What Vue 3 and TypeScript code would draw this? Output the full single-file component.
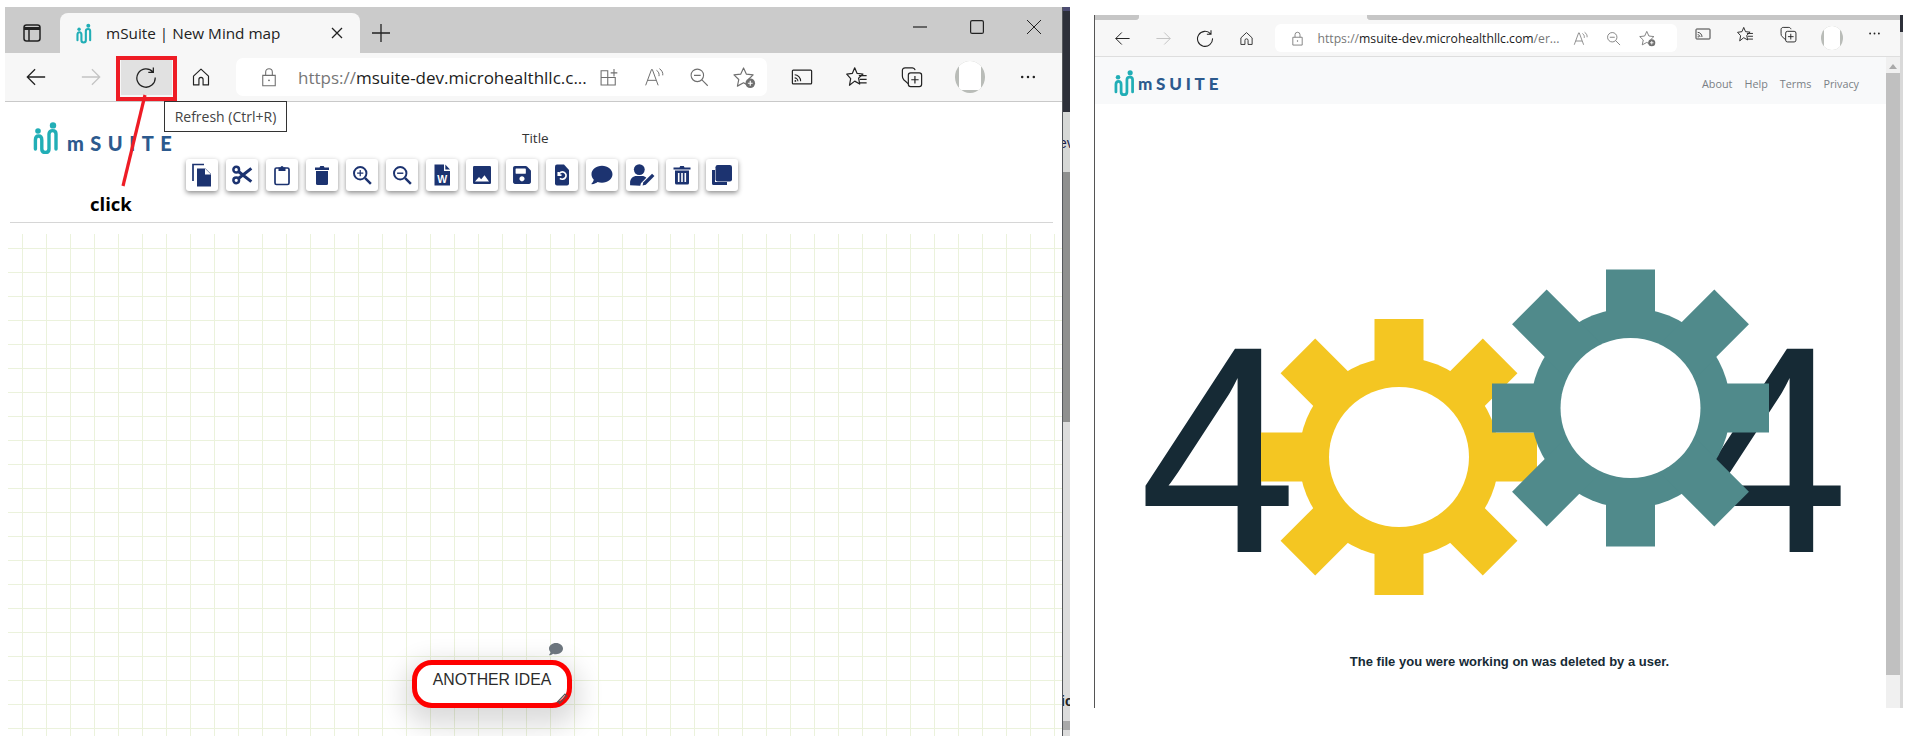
<script setup lang="ts">
const buttons: string[] = ['copy','cut','clip','trash','zin','zout','word','image','save','undo','comment','user','trasha','clone']
</script>

<template>
  <div class="shot">
    <svg class="defs" width="0" height="0">
      <symbol id="logo" viewBox="0 0 26 32">
        <circle cx="5" cy="9" r="2.8" fill="#21aeb6"/>
        <circle cx="20" cy="3.4" r="3.2" fill="#21aeb6"/>
        <path d="M2.4 27V18c0-2.6 1.4-4 3.2-4s3.2 1.4 3.200 4v9c0 2.600 1.600 3.500 3.600 3.500s3.600-.9 3.600-3.500V12c0-2 1.600-3.400 3.600-3.400s3.400 1.400 3.400 3.400v15" fill="none" stroke="#21aeb6" stroke-width="3.400" stroke-linecap="round"/>
      </symbol>
      <symbol id="i-back" viewBox="0 0 24 24"><path d="M22 12H2.5M11 3.5 2.5 12l8.500 8.500" fill="none" stroke="currentColor" stroke-width="1.400"/></symbol>
      <symbol id="i-refresh" viewBox="0 0 24 24"><path d="M19.500 6.500A10 10 0 1 0 22 12.500M20 1.500v5.500h-5.500" fill="none" stroke="currentColor" stroke-width="1.400"/></symbol>
      <symbol id="i-home" viewBox="0 0 24 24"><path d="M3 11 12 2.500 21 11v10.500h-6.500V15a2.500 2.500 0 0 0-5 0v6.500H3z" fill="none" stroke="currentColor" stroke-width="1.400" stroke-linejoin="round"/></symbol>
      <symbol id="i-lock" viewBox="0 0 24 24"><path d="M4.500 10h15v12.500h-15zM8 10V6a4 4 0 0 1 8 0v4" fill="none" stroke="currentColor" stroke-width="1.300"/><circle cx="12" cy="16" r="1.100" fill="currentColor"/></symbol>
      <symbol id="i-apps" viewBox="0 0 24 24"><path d="M2.500 4.500h8v8h-8zM2.500 12.500v9h8v-9zM10.500 12.500h9v9h-9zM14 7h8M18 2.500v9" fill="none" stroke="currentColor" stroke-width="1.300"/></symbol>
      <symbol id="i-read" viewBox="0 0 24 24"><path d="M2 22 9 3h1l7 19M4.500 16h10M15 4c2.500 1.500 3.500 4 3 7M18.500 2c3 2 4.500 5 4 8" fill="none" stroke="currentColor" stroke-width="1.200"/></symbol>
      <symbol id="i-zoom" viewBox="0 0 24 24"><circle cx="10" cy="10" r="7.500" fill="none" stroke="currentColor" stroke-width="1.300"/><path d="M15.500 15.500 22.500 22.500M6 10h8" fill="none" stroke="currentColor" stroke-width="1.300"/></symbol>
      <symbol id="i-fav" viewBox="0 0 24 24"><path d="M11 2l3 6.500 7 .8-5 4.800 1.400 6.900L11 17.500l-6.400 3.500L6 14.100 1 9.300l7-.8z" fill="none" stroke="currentColor" stroke-width="1.200" stroke-linejoin="round"/><circle cx="18" cy="18" r="5" fill="currentColor"/><path d="M18 15.500v5M15.500 18h5" stroke="#fff" stroke-width="1.200"/></symbol>
      <symbol id="i-cast" viewBox="0 0 24 24"><rect x="1.500" y="4.500" width="21" height="15" rx="1" fill="none" stroke="currentColor" stroke-width="1.300"/><path d="M4 9.500c3.500 0 6.500 3 6.500 7M4 13c1.700 0 3.500 1.500 3.500 3.500" fill="none" stroke="currentColor" stroke-width="1.200"/><circle cx="4.800" cy="16.300" r="1" fill="currentColor"/></symbol>
      <symbol id="i-favs" viewBox="0 0 24 24"><path d="M9.500 2l2.500 6 6.500.7-4.800 4.500 1.300 6.500L9.500 16.500 3.800 21l1.300-7.300L.8 8.900 7 8z" fill="none" stroke="currentColor" stroke-width="1.300" stroke-linejoin="round"/><path d="M14 10.500h8.500M15 14.500h7.500M15 18.500h7.500" stroke="currentColor" stroke-width="1.300"/></symbol>
      <symbol id="i-coll" viewBox="0 0 24 24"><rect x="8" y="7.500" width="14.500" height="15" rx="2.500" fill="none" stroke="currentColor" stroke-width="1.300"/><path d="M15.200 11v8M11.200 15h8M8 19.500 3 15c-1-1-1.500-2-1.500-4V5c0-1.500 1-3 3-3h8c1.500 0 2.500 1 3 2.500" fill="none" stroke="currentColor" stroke-width="1.300"/></symbol>
      <symbol id="i-more" viewBox="0 0 24 24"><circle cx="5" cy="12" r="1.500" fill="currentColor"/><circle cx="12" cy="12" r="1.500" fill="currentColor"/><circle cx="19" cy="12" r="1.500" fill="currentColor"/></symbol>
    </svg>

    <section class="win-left">
      <div class="tabstrip">
        <div class="sidebtn">
          <svg width="18" height="18" viewBox="0 0 18 18"><rect x="1" y="1" width="16" height="16" rx="2.500" fill="none" stroke="#222" stroke-width="1.500"/><path d="M1 4.500h16" stroke="#222" stroke-width="3"/><path d="M6 5v12" stroke="#222" stroke-width="1.500"/></svg>
        </div>
        <div class="tab">
          <svg class="tab-ico" width="16" height="21"><use href="#logo"/></svg>
          <span class="tab-title">mSuite | New Mind map</span>
          <svg width="12" height="12" viewBox="0 0 12 12"><path d="M1 1l10 10M11 1 1 11" stroke="#222" stroke-width="1.300"/></svg>
        </div>
        <div class="plus">
          <svg width="18" height="18" viewBox="0 0 18 18"><path d="M9 0v18M0 9h18" stroke="#222" stroke-width="1.300"/></svg>
        </div>
        <div class="spacer"></div>
        <div class="winbtns">
          <div class="winbtn"><svg width="14" height="14" viewBox="0 0 14 14"><path d="M0 7h14" stroke="#222" stroke-width="1.200"/></svg></div>
          <div class="winbtn"><svg width="14" height="14" viewBox="0 0 14 14"><rect x=".6" y=".6" width="12.800" height="12.800" rx="1.500" fill="none" stroke="#222" stroke-width="1.200"/></svg></div>
          <div class="winbtn"><svg width="14" height="14" viewBox="0 0 14 14"><path d="M0 0l14 14M14 0 0 14" stroke="#222" stroke-width="1"/></svg></div>
        </div>
      </div>
      <div class="bar">
        <div class="navbtn dark"><svg width="22" height="22"><use href="#i-back"/></svg></div>
        <div class="navbtn faint flip"><svg width="22" height="22"><use href="#i-back"/></svg></div>
        <div class="navbtn dark hot"><svg width="22" height="22"><use href="#i-refresh"/></svg></div>
        <div class="navbtn dark"><svg width="20" height="22"><use href="#i-home"/></svg></div>
        <div class="addr">
          <svg class="lock" width="20" height="22"><use href="#i-lock"/></svg>
          <span class="url"><span class="g">https://</span>msuite-dev.microhealthllc.c...</span>
          <div class="addr-ico"><svg width="20" height="20"><use href="#i-apps"/></svg></div>
          <div class="addr-ico"><svg width="20" height="20"><use href="#i-read"/></svg></div>
          <div class="addr-ico"><svg width="20" height="20"><use href="#i-zoom"/></svg></div>
          <div class="addr-ico"><svg width="23" height="23"><use href="#i-fav"/></svg></div>
        </div>
        <div class="bar-right">
          <div class="navbtn dark"><svg width="22" height="22"><use href="#i-cast"/></svg></div>
          <div class="navbtn dark"><svg width="22" height="22"><use href="#i-favs"/></svg></div>
          <div class="navbtn dark"><svg width="22" height="22"><use href="#i-coll"/></svg></div>
          <div class="navbtn av"><div class="avatar"><i></i></div></div>
          <div class="navbtn dark more"><svg width="20" height="20"><use href="#i-more"/></svg></div>
        </div>
      </div>

      <div class="page">
        <header class="mm-head">
          <div class="mm-logo">
            <svg width="26" height="32"><use href="#logo"/></svg>
            <span class="wordmark big">mSUITE</span>
          </div>
          <div class="mm-main">
            <div class="mm-title">Title</div>
            <div class="tools">
              <div v-for="b in buttons" :key="b" class="tool">
                <svg v-if="b === 'copy'" viewBox="0 0 24 24"><path d="M7 5.500h8.500L21 11v12.500H7z"/><path d="M15 5.500V11.500h6" fill="#fff"/><path d="M3 18V1.500h11" fill="none" stroke="currentColor" stroke-width="1.700"/></svg>
                <svg v-else-if="b === 'cut'" viewBox="-1.500 -1.500 27 27"><g fill="none" stroke="currentColor"><circle cx="5.500" cy="6" r="3.200" stroke-width="2.800"/><circle cx="5.500" cy="18" r="3.200" stroke-width="2.800"/><path d="M8 8 22.500 19.500M8 16 22.500 4.500" stroke-width="3.400"/></g></svg>
                <svg v-else-if="b === 'clip'" viewBox="0 0 24 24"><rect x="5" y="5" width="14" height="16.500" rx="1.500" fill="none" stroke="currentColor" stroke-width="1.700"/><path d="M8.500 4.500h2a1.500 1.500 0 0 1 3 0h2v3.500h-7z"/></svg>
                <svg v-else-if="b === 'trash'" viewBox="0 0 24 24"><path d="M5 4.500h4.500l.8-1.500h3.400l.8 1.500H19V7H5z"/><path d="M6 8h12v12.500a1.500 1.500 0 0 1-1.500 1.500h-9A1.500 1.500 0 0 1 6 20.500z"/></svg>
                <svg v-else-if="b === 'zin'" viewBox="-1.500 -1.500 27 27"><circle cx="10" cy="10" r="7" fill="none" stroke="currentColor" stroke-width="2.200"/><path d="M15.500 15.500 22 22" stroke="currentColor" stroke-width="2.800"/><path d="M10 6.500v7M6.500 10h7" stroke="currentColor" stroke-width="1.400"/></svg>
                <svg v-else-if="b === 'zout'" viewBox="-1.500 -1.500 27 27"><circle cx="10" cy="10" r="7" fill="none" stroke="currentColor" stroke-width="2.200"/><path d="M15.500 15.500 22 22" stroke="currentColor" stroke-width="2.800"/><path d="M6.500 10h7" stroke="currentColor" stroke-width="1.600"/></svg>
                <svg v-else-if="b === 'word'" viewBox="0 0 24 24"><path d="M4.500 1.500h9.500v6.500h6v14.500H4.500z"/><path d="M15.300 1.500 20 6.500h-4.700z"/><text x="12.300" y="20" text-anchor="middle" class="w">W</text></svg>
                <svg v-else-if="b === 'image'" viewBox="0 0 24 24"><rect x="3" y="3" width="18" height="18" rx="1.200"/><path d="M5 18.500l4-4.500 2.200 2.200 3.300-4 4.500 6.300z" fill="#fff"/></svg>
                <svg v-else-if="b === 'save'" viewBox="-76 -44 600 600"><path d="M433.941 129.941l-83.882-83.882A48 48 0 0 0 316.118 32H48C21.490 32 0 53.490 0 80v352c0 26.510 21.490 48 48 48h352c26.510 0 48-21.490 48-48V163.882a48 48 0 0 0-14.059-33.941zM224 416c-35.346 0-64-28.654-64-64 0-35.346 28.654-64 64-64s64 28.654 64 64c0 35.346-28.654 64-64 64zm96-304.520V212c0 6.627-5.373 12-12 12H76c-6.627 0-12-5.373-12-12V108c0-6.627 5.373-12 12-12h228.520c3.183 0 6.235 1.264 8.485 3.515l3.480 3.480A11.996 11.996 0 0 1 320 111.480z"/></svg>
                <svg v-else-if="b === 'undo'" viewBox="0 0 24 24"><path d="M5 3.500a2 2 0 0 1 2-2h7l5 5.500v13.500a2 2 0 0 1-2 2H7a2 2 0 0 1-2-2z"/><path d="M8.800 11.500a3.700 3.700 0 1 1 1.100 3.800M8.300 9v3.200h3.200" fill="none" stroke="#fff" stroke-width="1.700"/></svg>
                <svg v-else-if="b === 'comment'" viewBox="-36 -36 585 585"><path d="M256 32C114.600 32 0 125.100 0 240c0 49.600 21.400 95 57 130.700C44.500 421.100 2.700 466 2.200 466.500c-2.200 2.300-2.800 5.700-1.500 8.700S4.800 480 8 480c66.300 0 116-31.800 140.600-51.400 32.700 12.300 69 19.400 107.400 19.400 141.400 0 256-93.100 256-208S397.400 32 256 32z"/></svg>
                <svg v-else-if="b === 'user'" viewBox="0 0 24 24" class="wide"><circle cx="9.500" cy="7" r="5"/><path d="M1 21.500v-2.500c0-3.500 2.800-6 6-6h5c1.500 0 3 .6 4 1.500l-5 5-.6 2.500z"/><path d="M12.500 21.800l.8-3 8-8 2.200 2.200-8 8z"/></svg>
                <svg v-else-if="b === 'trasha'" viewBox="0 0 24 24"><path d="M3.500 4.500h6l.7-1.500h3.600l.7 1.500h6v2h-17z"/><path d="M5 7.500h14V20a1.500 1.500 0 0 1-1.500 1.500h-11A1.500 1.500 0 0 1 5 20z"/><path d="M8.700 10v9M12 10v9M15.300 10v9" stroke="#fff" stroke-width="1.600"/></svg>
                <svg v-else viewBox="0 0 24 24"><rect x="5.500" y="2" width="16.500" height="16.500" rx="2.200"/><path d="M3.500 7v13.500h13.500" fill="none" stroke="currentColor" stroke-width="3" stroke-linejoin="round"/></svg>
              </div>
            </div>
          </div>
        </header>
        <div class="sep"></div>
        <div class="canvas">
          <div class="node">
            ANOTHER IDEA
            <svg class="node-note" width="14" height="14" viewBox="0 10 512 490"><path d="M256 32C114.600 32 0 125.100 0 240c0 49.600 21.400 95 57 130.700C44.500 421.100 2.700 466 2.200 466.500c-2.200 2.300-2.800 5.700-1.500 8.700S4.800 480 8 480c66.300 0 116-31.800 140.600-51.400 32.700 12.300 69 19.400 107.400 19.400 141.400 0 256-93.100 256-208S397.400 32 256 32z"/></svg>
            <svg class="node-pen" width="12" height="12" viewBox="0 0 12 12"><path d="M1 10.500 9 2l2 2-8 8M2 9l2 2" fill="none" stroke="#555" stroke-width="1.100"/></svg>
          </div>
        </div>
      </div>
    </section>

    <aside class="strip">
      <div class="s-dark"></div>
      <div class="s-light"><span>ev</span></div>
      <div class="s-grey"><span>ic</span></div>
    </aside>

    <section class="win-right">
      <div class="r-tabs"><i class="r-t1"></i><i class="r-t2"></i><i class="r-t3"></i></div>
      <div class="r-bar">
        <div class="r-nav dark"><svg width="17" height="17"><use href="#i-back"/></svg></div>
        <div class="r-nav faint flip"><svg width="17" height="17"><use href="#i-back"/></svg></div>
        <div class="r-nav dark"><svg width="18" height="18"><use href="#i-refresh"/></svg></div>
        <div class="r-nav dark"><svg width="15" height="17"><use href="#i-home"/></svg></div>
        <div class="r-addr">
          <svg class="r-lock" width="15" height="17"><use href="#i-lock"/></svg>
          <span class="r-url"><span class="g">https://</span>msuite-dev.microhealthllc.com<span class="g">/er...</span></span>
          <svg class="r-aico" width="15" height="15"><use href="#i-read"/></svg>
          <svg class="r-aico" width="15" height="15"><use href="#i-zoom"/></svg>
          <svg class="r-aico" width="17" height="17"><use href="#i-fav"/></svg>
        </div>
        <div class="r-right">
          <div class="r-nav2 dark"><svg width="16" height="16"><use href="#i-cast"/></svg></div>
          <div class="r-nav2 dark"><svg width="17" height="17"><use href="#i-favs"/></svg></div>
          <div class="r-nav2 dark"><svg width="17" height="17"><use href="#i-coll"/></svg></div>
          <div class="r-nav2"><div class="avatar small"><i></i></div></div>
          <div class="r-nav2 dark"><svg width="15" height="15"><use href="#i-more"/></svg></div>
        </div>
      </div>
      <div class="r-page">
        <div class="r-content">
          <header class="r-head">
            <div class="r-logo">
              <svg width="21" height="26"><use href="#logo"/></svg>
              <span class="wordmark small">mSUITE</span>
            </div>
            <nav class="r-links"><span>About</span><span>Help</span><span>Terms</span><span>Privacy</span></nav>
          </header>
          <svg class="art" width="791" height="540" viewBox="1095 104 791 540">
            <g class="digit">
              <text transform="translate(1139 552) scale(1 1.040)">4</text>
              <text transform="translate(1691 552) scale(1 1.040)">4</text>
            </g>
            <g fill="#f4c622" transform="translate(1399 457)">
              <circle r="100"/>
              <rect x="-24.500" y="-138" width="49" height="276"/>
              <rect x="-138" y="-24.500" width="276" height="49"/>
              <rect x="-24.500" y="-143" width="49" height="286" transform="rotate(45)"/>
              <rect x="-24.500" y="-143" width="49" height="286" transform="rotate(-45)"/>
              <circle r="70" fill="#fff"/>
            </g>
            <g fill="#508a8b" transform="translate(1630.500 408)">
              <circle r="100"/>
              <rect x="-24.500" y="-138.500" width="49" height="277"/>
              <rect x="-138.500" y="-24.500" width="277" height="49"/>
              <rect x="-24.500" y="-143" width="49" height="286" transform="rotate(45)"/>
              <rect x="-24.500" y="-143" width="49" height="286" transform="rotate(-45)"/>
              <circle r="70" fill="#fff"/>
            </g>
          </svg>
          <p class="msg">The file you were working on was deleted by a user.</p>
        </div>
        <div class="r-scroll">
          <span class="r-up"></span>
          <span class="r-thumb"></span>
        </div>
      </div>
    </section>
    <div class="r-edge"></div>

    <div class="mark-box"></div>
    <svg class="mark-arrow" width="40" height="100" viewBox="0 0 40 100"><path d="M30 1 8 92" stroke="#ee1c25" stroke-width="3.200" fill="none"/></svg>
    <div class="mark-text">click</div>
    <div class="tip">Refresh (Ctrl+R)</div>
  </div>
</template>

<style>
html, body { margin: 0; background: #fff; }
</style>

<style scoped>
.shot {
  position: relative;
  width: 1920px;
  height: 736px;
  overflow: hidden;
  background: #fff;
  display: flex;
  align-items: flex-start;
  font-family: "Open Sans", "Liberation Sans", sans-serif;
  color: #1b1b1b;
}
.defs { position: absolute; }

/* left window */
.win-left {
  margin: 7px 0 0 5px;
  width: 1057px;
  height: 729px;
  display: flex;
  flex-direction: column;
  flex: none;
  background: #fff;
}
.tabstrip {
  height: 46px;
  background: #cbcbcb;
  display: flex;
  align-items: flex-end;
  flex: none;
}
.sidebtn {
  width: 55px; height: 40px;
  display: flex; align-items: center; justify-content: center;
  padding-right: 2px; box-sizing: border-box;
}
.tab {
  width: 300px; height: 40px;
  background: #f7f7f7;
  border-radius: 8px 8px 0 0;
  display: flex; align-items: center;
  padding-left: 16px; padding-right: 17px;
  box-sizing: border-box;
}
.tab-ico { flex: none; }
.tab-title { margin-left: 14px; flex: 1; font-size: 15.300px; color: #222; white-space: nowrap; }
.plus { width: 42px; height: 40px; display: flex; align-items: center; justify-content: center; margin-left: 0; }
.spacer { flex: 1; }
.winbtns { display: flex; align-self: flex-start; margin-top: 13px; }
.winbtn { width: 57px; height: 14px; display: flex; justify-content: center; }

.bar {
  height: 48px;
  background: #f7f7f7;
  border-bottom: 1px solid #c9c9c9;
  display: flex; align-items: center;
  padding-left: 3.500px;
  flex: none;
}
.navbtn { width: 55px; height: 36px; display: flex; align-items: center; justify-content: center; flex: none; }
.hot { background: #e1e1e1; width: 51px; margin: 0 2px; }
.av { margin-left: 3px; }
.more { margin-left: 3px; }
.dark { color: #222; }
.faint { color: #c4c4c4; }
.flip svg { transform: scaleX(-1); }
.addr {
  margin-left: 7.500px;
  width: 531px; height: 38px;
  background: #fff;
  border-radius: 7px;
  display: flex; align-items: center;
  color: #6f6f6f;
  flex: none;
}
.lock { margin-left: 23px; flex: none; }
.url { margin-left: 19px; flex: 1; font-size: 17px; color: #1c1c1c; white-space: nowrap; }
.g { color: #777; }
.addr-ico { width: 45px; display: flex; justify-content: center; flex: none; }
.addr-ico:last-child { margin-right: 11px; }
.bar-right { display: flex; margin-left: 7px; }
.avatar { width: 30px; height: 32px; border-radius: 50%; background: #b9bcb8; position: relative; overflow: hidden; }
.avatar i { position: absolute; left: 4px; top: 0; width: 22px; height: 29px; background: #fff; }

.page { flex: 1; display: flex; flex-direction: column; min-height: 0; }
.mm-head { display: flex; padding: 20px 0 0 28px; height: 100px; flex: none; }
.mm-logo { width: 153px; display: flex; align-items: flex-start; flex: none; }
.wordmark {
  font-family: Lato, "Open Sans", sans-serif;
  font-weight: 900;
  color: #2c5a8e;
}
.wordmark.big { font-size: 20px; letter-spacing: 6.500px; line-height: 24px; margin: 9px 0 0 8px; }
.wordmark.small { font-size: 17px; letter-spacing: 3.800px; line-height: 18px; margin: 5px 0 0 3px; }
.mm-main { display: flex; flex-direction: column; }
.mm-title { margin: 7px 0 0 336px; font-size: 13.500px; line-height: 18px; color: #333; }
.tools { display: flex; gap: 8px; margin-top: 12px; }
.tool {
  width: 32px; height: 32px;
  background: #fff;
  border-radius: 3px;
  box-shadow: 0 2px 5px rgba(0,0,0,.45);
  display: flex; align-items: center; justify-content: center;
  color: #1c3370;
}
.tool svg { width: 24px; height: 24px; fill: currentColor; overflow: visible; }
.tool svg.wide { width: 26px; height: 26px; }
.tool .w { font: 700 10.500px "Liberation Sans", sans-serif; fill: #fff; }
.sep { height: 1px; background: #d6d6d6; margin: 0 9px 0 5px; flex: none; }
.canvas {
  position: relative;
  flex: 1;
  margin-top: 11px;
  margin-left: 3px;
  background-color: #fff;
  background-image:
    linear-gradient(to right, #ebf2dc 1px, transparent 1px),
    linear-gradient(to bottom, #ebf2dc 1px, transparent 1px);
  background-size: 24px 24px;
  background-position: 14px 14px;
}
.node {
  position: absolute;
  left: 404px; top: 426px;
  width: 160px; height: 48px;
  box-sizing: border-box;
  border: 5px solid #fe0000;
  border-radius: 20px;
  background: #fff;
  box-shadow: 0 10px 26px 8px rgba(0,0,0,.14);
  font: 15.800px/29px "Liberation Sans", sans-serif;
  color: #2b2b2b;
  text-align: center;
  white-space: nowrap;
}
.node-note { position: absolute; right: 4px; top: -23px; fill: #6c757d; }
.node-pen { position: absolute; right: -1px; bottom: -1px; }

/* strip between the windows */
.strip { width: 8px; height: 729px; margin-top: 7px; display: flex; flex-direction: column; flex: none; border-left: 1px solid #55585c; box-sizing: border-box; }
.s-dark { height: 105px; background: linear-gradient(#4c4c72 0 4px, #2d3039 4px); flex: none; }
.s-light { height: 60px; background: #d6d8d6; flex: none; overflow: hidden; position: relative; }
.s-light span, .s-grey span { position: absolute; left: -4px; font: 14px "Liberation Sans", sans-serif; color: #1c1c4a; }
.s-light span { top: 23px; }
.s-grey { flex: 1; position: relative; overflow: hidden; background: linear-gradient(#8f908f 0 250px, #dcdcdc 250px 549px, #a9a9a9 549px 558px, #dcdcdc 558px); }
.s-grey span { top: 521px; left: -2px; font-weight: 700; color: #222; }

/* right window */
.win-right {
  margin: 15px 0 0 24px;
  width: 806px;
  height: 693px;
  border-left: 1px solid #555;
  box-sizing: border-box;
  display: flex; flex-direction: column;
  flex: none;
}
.r-tabs { height: 5px; display: flex; flex: none; }
.r-tabs i { display: block; height: 5px; }
.r-t1 { width: 44px; background: #c6c6c6; border-radius: 0 0 3px 0; }
.r-t2 { width: 228px; background: #f7f7f7; }
.r-t3 { flex: 1; background: #c6c6c6; border-radius: 0 0 0 3px; }
.r-bar {
  height: 37px; flex: none;
  background: #f7f7f7;
  border-bottom: 1px solid #dedede;
  box-sizing: border-box;
  display: flex; align-items: center;
  padding-left: 6.500px;
}
.r-nav { width: 41.500px; display: flex; justify-content: center; flex: none; }
.r-addr {
  margin-left: 7px;
  width: 402px; height: 28px;
  background: #fff;
  border-radius: 6px;
  display: flex; align-items: center;
  color: #6f6f6f;
  flex: none;
}
.r-lock { margin-left: 15px; flex: none; }
.r-url { margin-left: 13px; flex: 1; font-size: 12.200px; color: #1c1c1c; white-space: nowrap; }
.r-aico { flex: none; margin-right: 18px; }
.r-aico:last-child { margin-right: 21px; }
.r-right { display: flex; margin-left: 4.500px; }
.r-nav2 { width: 43px; display: flex; justify-content: center; flex: none; }
.avatar.small { width: 22px; height: 24px; }
.avatar.small i { left: 3px; width: 16px; height: 24px; }

.r-page { flex: 1; display: flex; min-height: 0; }
.r-content { flex: 1; display: flex; flex-direction: column; background: #fff; min-width: 0; }
.r-head {
  height: 47px; flex: none;
  background: #f8f9fa;
  display: flex; align-items: flex-start; justify-content: space-between;
  padding: 13px 27px 0 19px;
  box-sizing: border-box;
}
.r-logo { display: flex; align-items: flex-start; }
.r-links { display: flex; gap: 12px; font-size: 10.800px; line-height: 28px; margin-top: 0; color: #7a7f85; }
.art { display: block; flex: none; }
.digit text { font: 284px "Liberation Sans", sans-serif; fill: #162a35; }
.msg {
  margin: 10px 0 0;
  padding-left: 38px;
  text-align: center;
  font: 700 13px/16px "Liberation Sans", sans-serif;
  color: #162a35;
}
.r-scroll { width: 14px; background: #f0f0f0; flex: none; position: relative; }
.r-up { position: absolute; left: 3px; top: 7px; width: 0; height: 0; border: 4px solid transparent; border-top: 0; border-bottom: 5px solid #a9a9a9; }
.r-thumb { position: absolute; left: 0; right: 0; top: 16px; height: 602px; background: #c0c0c0; }
.r-edge { position: absolute; left: 1900px; top: 15px; width: 3px; height: 693px; background: linear-gradient(#2d3039 0 17px, #d9d9d9 17px); }

/* annotations */
.mark-box {
  position: absolute;
  left: 116px; top: 56px;
  width: 61px; height: 45px;
  box-sizing: border-box;
  border: 4px solid #ee1c25;
}
.mark-arrow { position: absolute; left: 115px; top: 94px; }
.mark-text {
  position: absolute;
  left: 90px; top: 191px;
  font: 700 18.500px/26px "Open Sans", sans-serif;
  color: #000;
}
.tip {
  position: absolute;
  left: 164px; top: 101px;
  width: 123px; height: 31px;
  box-sizing: border-box;
  border: 1px solid #333;
  background: #fff;
  font-size: 14px; line-height: 29px;
  text-align: center;
  color: #444;
  white-space: nowrap;
}
</style>
